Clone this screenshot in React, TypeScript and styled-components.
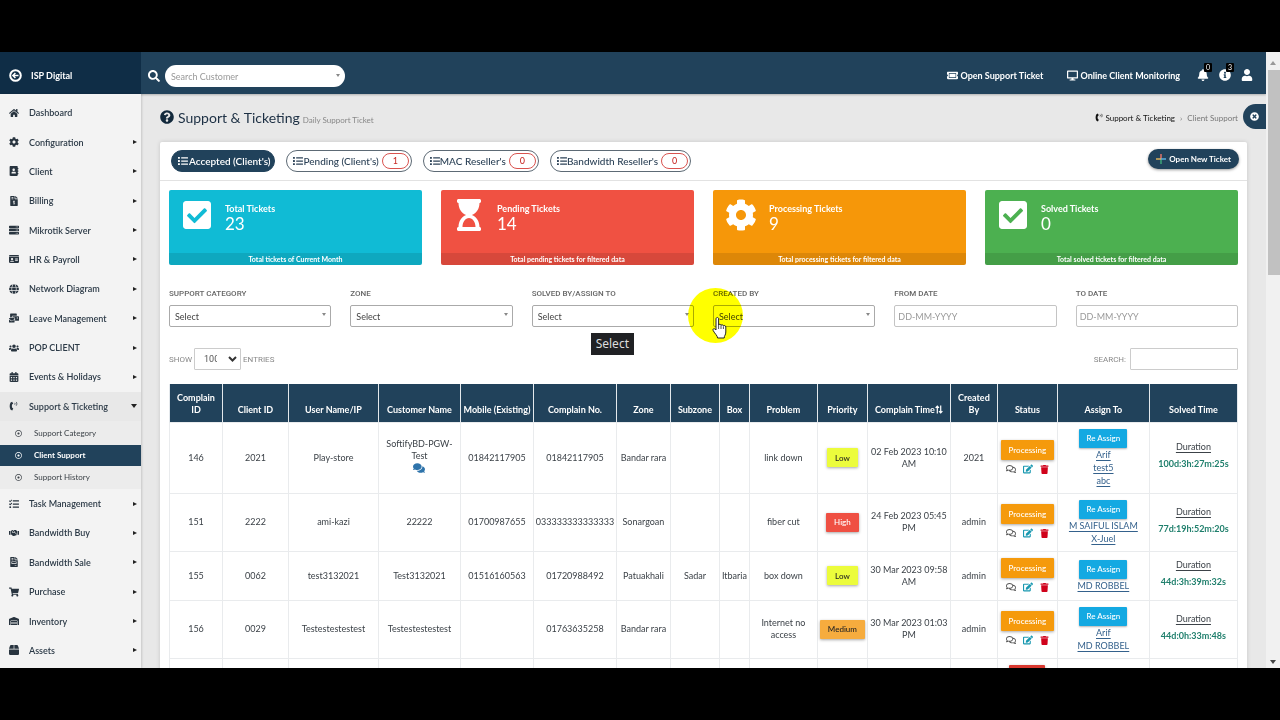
import React from 'react';
import styled, { createGlobalStyle } from 'styled-components';
import {
  FaAddressBook, FaBell, FaBox, FaCalendarAlt, FaCheckSquare, FaCog, FaComments,
  FaDesktop, FaEdit, FaFileInvoice, FaFileInvoiceDollar, FaGlobe, FaHandshake, FaHome,
  FaHourglassStart, FaIdCard, FaInfoCircle, FaList, FaMailBulk, FaQuestionCircle, FaRegComments,
  FaRegDotCircle, FaSearch, FaServer, FaShoppingCart, FaTasks, FaTicketAlt, FaTimesCircle,
  FaTrash, FaUser, FaUsers, FaWarehouse,
} from 'react-icons/fa';

const navy = '#21425b';

const GlobalStyle = createGlobalStyle`
  * { box-sizing: border-box; }
  body { margin: 0; background: #000; font-family: Lato, "Liberation Sans", sans-serif; font-size: 9px; color: #3c4248; }
  button, input, select { font-family: inherit; font-size: inherit; margin: 0; }
  a { color: inherit; text-decoration: none; }
  svg { flex: none; }
`;

const Stage = styled.div`
  height: 100vh;
  padding: 52px 0;
  display: flex;
`;
const Shell = styled.div`
  flex: 1;
  min-width: 0;
  display: flex;
  flex-direction: column;
  background: #e8e8e8;
`;
const Columns = styled.div`
  flex: 1;
  min-height: 0;
  display: flex;
`;

/* top bar */
const TopBar = styled.header`
  display: flex;
  height: 42px;
  flex: none;
  background: ${navy};
  color: #fff;
  box-shadow: 0 1px 2px rgba(0, 0, 0, 0.25);
`;
const Brand = styled.div`
  width: 141px;
  padding: 5px 9px 0;
  display: flex;
  align-items: center;
  gap: 9px;
  background: #0f2d46;
  font-weight: 700;
`;
const TopSearch = styled.div`
  display: flex;
  align-items: center;
  gap: 5px;
  padding: 5px 0 0 7px;
`;
const SelectWrap = styled.div`
  position: relative;
  display: flex;
`;
const Caret = styled.span<{ $top: number }>`
  position: absolute;
  right: 5px;
  top: ${(p) => p.$top}px;
  border: 2px solid transparent;
  border-top: 3px solid #888;
  border-bottom: 0;
  pointer-events: none;
`;
const CustomerSelect = styled.select`
  appearance: none;
  width: 180px;
  height: 22px;
  border: 0;
  border-radius: 11px;
  padding: 1px 6px 0;
  background: #fff;
  color: #999;
`;
const TopLinks = styled.nav`
  margin-left: auto;
  display: flex;
  align-items: center;
  padding: 4px 13px 0 0;
  font-weight: 700;
`;
const TopLink = styled.a`
  display: flex;
  align-items: center;
  gap: 2px;
  margin-right: 24px;
`;
const IconButton = styled.button`
  position: relative;
  display: flex;
  margin-left: 10px;
  padding: 0;
  border: 0;
  background: none;
  color: #fff;
  &:first-of-type { margin-left: -7px; }
`;
const Count = styled.span`
  position: absolute;
  left: 7px;
  top: -6px;
  width: 8px;
  background: #000;
  border-radius: 1px;
  font-size: 7px;
  line-height: 9px;
`;

/* side bar */
const Sidebar = styled.nav`
  width: 141px;
  flex: none;
  display: flex;
  flex-direction: column;
  padding: 4px 0 3px;
  background: #f3f3f3;
  box-shadow: 1px 0 2px rgba(0, 0, 0, 0.15);
  overflow: hidden;
`;
const NavItem = styled.a<{ $open?: boolean }>`
  flex: 1 0 27px;
  display: flex;
  align-items: center;
  padding: 0 4px 0 9px;
  font-weight: 600;
  color: #2c3a47;
  background: ${(p) => (p.$open ? '#e8e8e8' : 'transparent')};
`;
const NavIcon = styled.span`
  width: 20px;
  display: flex;
  font-size: 10px;
  color: #28343f;
`;
const NavArrow = styled.span<{ $down?: boolean }>`
  margin-left: auto;
  border-style: solid;
  border-width: ${(p) => (p.$down ? '4px 3px 0' : '2px 0 2px 4px')};
  border-color: ${(p) => (p.$down ? '#222 transparent' : 'transparent #222')};
`;
const SubMenu = styled.div`
  flex: none;
  padding-top: 1px;
  background: #ececec;
`;
const SubItem = styled.a<{ $active?: boolean }>`
  display: flex;
  align-items: center;
  gap: 12px;
  height: ${(p) => (p.$active ? 21 : 23)}px;
  padding-left: 15px;
  font-size: 8px;
  font-weight: ${(p) => (p.$active ? 700 : 400)};
  color: ${(p) => (p.$active ? '#fff' : 'inherit')};
  background: ${(p) => (p.$active ? navy : 'transparent')};
`;

/* content */
const Main = styled.main`
  position: relative;
  flex: 1;
  min-width: 0;
  padding: 0 19px;
  overflow: hidden;
`;
const TitleRow = styled.div`
  display: flex;
  align-items: center;
  height: 48px;
  padding-bottom: 2px;
`;
const Title = styled.h1`
  margin: 0 3px 0 4px;
  font-size: 14px;
  font-weight: 400;
  color: #1d3044;
`;
const Hint = styled.span`
  padding-top: 5px;
  font-size: 8px;
  color: #888;
`;
const Crumbs = styled.div`
  margin-left: auto;
  margin-right: 9px;
  display: flex;
  align-items: center;
  gap: 5px;
  padding-top: 2px;
  font-size: 8px;
  color: #777;
`;
const CrumbLink = styled.a`
  display: flex;
  gap: 1px;
  color: #111;
`;
const CloseTab = styled.button`
  position: absolute;
  right: 0;
  top: 10px;
  width: 23px;
  height: 25px;
  padding: 0 0 0 7px;
  display: flex;
  align-items: center;
  border: 0;
  border-radius: 13px 0 0 13px;
  background: ${navy};
  color: #fff;
`;
const Card = styled.section`
  background: #fff;
  border-radius: 2px;
  box-shadow: 0 0 4px rgba(0, 0, 0, 0.15);
  height: 100%;
`;
const CardHead = styled.div`
  display: flex;
  align-items: center;
  gap: 11px;
  height: 39px;
  padding: 0 8px 0 11px;
  border-bottom: 1px solid #e2e2e2;
`;
const Tab = styled.button<{ $active?: boolean }>`
  display: flex;
  align-items: center;
  gap: ${(p) => (p.$active ? 1 : 0)}px;
  height: 22px;
  padding: 0 ${(p) => (p.$active ? 4 : 2)}px 0 6px;
  border: 1px solid ${(p) => (p.$active ? navy : '#5d6a75')};
  border-radius: 11px;
  background: ${(p) => (p.$active ? navy : '#fff')};
  color: ${(p) => (p.$active ? '#fff' : '#2c4257')};
  font-size: 10px;
  font-weight: ${(p) => (p.$active ? 600 : 500)};
  white-space: nowrap;
`;
const TabCount = styled.span`
  width: 27px;
  margin-left: 3px;
  border: 1px solid #d9534f;
  border-radius: 8px;
  line-height: 14px;
  color: #c9302c;
  font-size: 9px;
`;
const NewTicket = styled.button`
  display: flex;
  align-items: center;
  gap: 3px;
  height: 20px;
  margin: 0 0 4px auto;
  padding: 0 8px;
  border: 0;
  border-radius: 10px;
  background: ${navy};
  box-shadow: 0 1px 3px rgba(0, 0, 0, 0.4);
  color: #fff;
  font-size: 8px;
  font-weight: 700;
`;
const CardBody = styled.div`
  padding: 9px;
`;
const Stats = styled.div`
  display: grid;
  grid-template-columns: repeat(4, 1fr);
  gap: 19px;
`;
const Stat = styled.div<{ $bg: string }>`
  display: flex;
  flex-direction: column;
  height: 75px;
  border-radius: 2px;
  overflow: hidden;
  background: ${(p) => p.$bg};
  color: #fff;
`;
const StatTop = styled.div`
  flex: 1;
  display: flex;
  gap: 12px;
  padding: 9px 12px;
`;
const StatLabel = styled.div`
  padding-top: 3px;
  font-size: 9px;
  line-height: 13px;
  font-weight: 700;
`;
const StatValue = styled.div`
  font-size: 17px;
  line-height: 18px;
`;
const StatFoot = styled.div`
  background: rgba(0, 0, 0, 0.1);
  text-align: center;
  font-size: 7px;
  line-height: 12px;
  font-weight: 700;
`;
const Filters = styled.div`
  display: grid;
  grid-template-columns: repeat(6, 1fr);
  gap: 19px;
  margin-top: 23px;
`;
const Field = styled.div`
  position: relative;
`;
const Label = styled.label`
  display: block;
  font: 500 8px/12px Roboto, "Liberation Sans", sans-serif;
  color: #666;
  margin-bottom: 5px;
`;
const FieldSelect = styled.select`
  appearance: none;
  width: 100%;
  height: 22px;
  padding: 0 5px;
  border: 1px solid #aaa;
  border-radius: 2px;
  background: #fff;
  color: #444;
`;
const DateInput = styled.input`
  width: 100%;
  height: 22px;
  padding: 0 3px;
  border: 1px solid #c4c4c4;
  border-radius: 2px;
  &::placeholder { color: #999; }
`;
const Tip = styled.div`
  position: absolute;
  z-index: 1;
  left: 59px;
  top: 45px;
  padding: 0 5px;
  background: #202124;
  color: #ddd;
  font: 12px/22px "Noto Sans", sans-serif;
`;
const Halo = styled.div`
  position: absolute;
  left: -25px;
  top: 0;
  width: 55px;
  height: 55px;
  border-radius: 50%;
  background: #ff0;
  mix-blend-mode: multiply;
  pointer-events: none;
`;
const Hand = styled.svg`
  position: absolute;
  left: -1px;
  top: 28px;
  pointer-events: none;
`;
const Tools = styled.div`
  display: flex;
  align-items: center;
  gap: 2px;
  margin: 21px 0 14px;
  font-family: Roboto, "Liberation Sans", sans-serif;
  font-size: 8px;
  color: #888;
`;
const LengthSelect = styled.select`
  appearance: none;
  width: 47px;
  height: 22px;
  padding: 0 23px 0 9px;
  border: 1px solid #ccc;
  border-radius: 1px;
  background: #fff;
  color: #555;
  font-size: 9px;
  text-overflow: clip;
`;
const Chevron = styled.svg`
  position: absolute;
  right: 4px;
  top: 7px;
  pointer-events: none;
`;
const SearchLabel = styled.label`
  margin-left: auto;
`;
const SearchInput = styled.input`
  width: 108px;
  height: 22px;
  margin-left: 2px;
  border: 1px solid #ccc;
  border-radius: 1px;
`;

/* ticket table */
const Table = styled.table`
  width: 100%;
  table-layout: fixed;
  border-collapse: collapse;
  line-height: 12px;
  text-align: center;
`;
const Th = styled.th`
  height: 38px;
  padding: 0 2px 6px;
  vertical-align: bottom;
  background: ${navy};
  border: 1px solid #e3e8ec;
  border-width: 0 1px;
  color: #fff;
  font-weight: 700;
`;
const SortIcon = styled.svg`
  vertical-align: -1px;
`;
const Td = styled.td`
  padding: 6px 1px;
  border: 1px solid #e9ebed;
`;
const Priority = styled.button<{ $level: string }>`
  padding: 0 8px;
  height: 19px;
  border: 0;
  border-radius: 1px;
  box-shadow: 0 1px 3px rgba(0, 0, 0, 0.35);
  background: ${(p) => (p.$level === 'High' ? '#ef5043' : p.$level === 'Low' ? '#ecfc3c' : '#f6ac3e')};
  color: ${(p) => (p.$level === 'High' ? '#fff' : '#222')};
  font-size: 8px;
  font-weight: 500;
`;
const StatusButton = styled.button<{ $red?: boolean }>`
  display: block;
  margin: 0 auto;
  height: 20px;
  min-width: 36px;
  padding: 0 8px;
  border: 0;
  border-radius: 1px;
  box-shadow: 0 1px 3px rgba(0, 0, 0, 0.35);
  background: ${(p) => (p.$red ? '#d9382f' : '#f59a0c')};
  color: #fff;
  font-size: 8px;
  font-weight: 500;
`;
const Actions = styled.div`
  display: flex;
  justify-content: center;
  align-items: flex-end;
  gap: 7px;
  height: 16px;
  padding-bottom: 2px;
`;
const Action = styled.button<{ $color: string }>`
  display: flex;
  padding: 0;
  border: 0;
  background: none;
  font-size: 10px;
  color: ${(p) => p.$color};
`;
const Assign = styled.button`
  display: block;
  margin: 0 auto;
  height: 19px;
  padding: 0 7px;
  border: 0;
  border-radius: 1px;
  background: #14a9e2;
  box-shadow: 0 1px 2px rgba(0, 0, 0, 0.3);
  color: #fff;
  font-size: 8px;
  font-weight: 500;
`;
const Person = styled.a`
  display: block;
  line-height: 13px;
  color: #34618c;
  text-decoration: underline;
  text-underline-offset: 2px;
`;
const Duration = styled.div`
  text-decoration: underline;
  text-underline-offset: 2px;
  margin-bottom: 5px;
`;
const Elapsed = styled.div`
  padding-bottom: 4px;
  color: #1f7f6c;
  font-weight: 700;
`;

/* window scroll bar */
const Scroll = styled.div`
  width: 14px;
  display: flex;
  flex-direction: column;
  align-items: center;
  padding: 9px 0 4px;
  background: #f1f1f1;
`;
const ScrollArrow = styled.span<{ $down?: boolean }>`
  border: 3px solid transparent;
  border-width: ${(p) => (p.$down ? '4px 3px 0' : '0 3px 4px')};
  border-color: ${(p) => (p.$down ? '#444' : '#999')} transparent;
`;
const Thumb = styled.div`
  width: 12px;
  height: 34%;
  margin: 5px 0 auto 2px;
  background: #c1c1c1;
`;

const Phone = ({ size = 10 }: { size?: number }) => (
  <svg width={size} height={size} viewBox="0 0 16 16" fill="currentColor">
    <path d="M5 1 2.500 2.200C.6 6 .6 10 2.600 13.800L5.200 15l1.600-3.200-1.700-1.100c-.8-1.800-.8-3.600 0-5.400l1.700-1.100z" />
    <path d="M9 3c.8.8.8 2 0 3M11.500 1.500c1.400 1.600 1.400 4.400 0 6" fill="none" stroke="currentColor" strokeWidth="1.200" />
  </svg>
);

const BackCircle = () => (
  <svg width="13" height="13" viewBox="0 0 13 13" fill="none" stroke="#fff">
    <circle cx="6.500" cy="6.500" r="5.300" strokeWidth="2" />
    <path d="M9.500 6.500H4M6.400 4 3.900 6.500 6.400 9" strokeWidth="1.500" />
  </svg>
);

const topItems: [string, React.ReactNode][] = [
  ['Dashboard', <FaHome />],
  ['Configuration', <FaCog />],
  ['Client', <FaAddressBook />],
  ['Billing', <FaFileInvoiceDollar />],
  ['Mikrotik Server', <FaServer />],
  ['HR & Payroll', <FaIdCard />],
  ['Network Diagram', <FaGlobe />],
  ['Leave Management', <FaMailBulk />],
  ['POP CLIENT', <FaUsers />],
  ['Events & Holidays', <FaCalendarAlt />],
];
const bottomItems: [string, React.ReactNode][] = [
  ['Task Management', <FaTasks />],
  ['Bandwidth Buy', <FaHandshake />],
  ['Bandwidth Sale', <FaFileInvoice />],
  ['Purchase', <FaShoppingCart />],
  ['Inventory', <FaWarehouse />],
  ['Assets', <FaBox />],
];
const stats: [string, string, string, string, React.ReactNode][] = [
  ['Total Tickets', '23', 'Total tickets of Current Month', '#10bbd5', <FaCheckSquare size={32} />],
  ['Pending Tickets', '14', 'Total pending tickets for filtered data', '#f05142', <FaHourglassStart size={32} />],
  ['Processing Tickets', '9', 'Total processing tickets for filtered data', '#f69709', <FaCog size={32} />],
  ['Solved Tickets', '0', 'Total solved tickets for filtered data', '#4cb050', <FaCheckSquare size={32} />],
];
const columns: [string, number][] = [
  ['Complain ID', 53], ['Client ID', 66], ['User Name/IP', 90], ['Customer Name', 82],
  ['Mobile (Existing)', 73], ['Complain No.', 83], ['Zone', 54], ['Subzone', 49], ['Box', 30],
  ['Problem', 68], ['Priority', 50], ['Complain Time', 83], ['Created By', 47], ['Status', 60],
  ['Assign To', 92], ['Solved Time', 88],
];
const columnTotal = columns.reduce((sum, c) => sum + c[1], 0);

interface Ticket {
  cells: string[];
  priority: string;
  time: string;
  by: string;
  people: string[];
  elapsed: string;
  chat?: boolean;
}
const tickets: Ticket[] = [
  { cells: ['146', '2021', 'Play-store', 'SoftifyBD-PGW-Test', '01842117905', '01842117905', 'Bandar rara', '', '', 'link down'], priority: 'Low', time: '02 Feb 2023 10:10 AM', by: '2021', people: ['Arif', 'test5', 'abc'], elapsed: '100d:3h:27m:25s', chat: true },
  { cells: ['151', '2222', 'ami-kazi', '22222', '01700987655', '033333333333333', 'Sonargoan', '', '', 'fiber cut'], priority: 'High', time: '24 Feb 2023 05:45 PM', by: 'admin', people: ['M SAIFUL ISLAM', 'X-Juel'], elapsed: '77d:19h:52m:20s' },
  { cells: ['155', '0062', 'test3132021', 'Test3132021', '01516160563', '01720988492', 'Patuakhali', 'Sadar', 'Itbaria', 'box down'], priority: 'Low', time: '30 Mar 2023 09:58 AM', by: 'admin', people: ['MD ROBBEL'], elapsed: '44d:3h:39m:32s' },
  { cells: ['156', '0029', 'Testestestestest', 'Testestestestest', '', '01763635258', 'Bandar rara', '', '', 'Internet no access'], priority: 'Medium', time: '30 Mar 2023 01:03 PM', by: 'admin', people: ['Arif', 'MD ROBBEL'], elapsed: '44d:0h:33m:48s' },
];

const MenuLink = ({ label, icon, arrow = true }: { label: string; icon: React.ReactNode; arrow?: boolean }) => (
  <NavItem href="#">
    <NavIcon>{icon}</NavIcon>
    {label}
    {arrow && <NavArrow />}
  </NavItem>
);

const SelectField = ({ id, label, children }: { id: string; label: string; children?: React.ReactNode }) => (
  <Field>
    <Label htmlFor={id}>{label}</Label>
    <SelectWrap>
      <FieldSelect id={id}><option>Select</option></FieldSelect>
      <Caret $top={8} />
    </SelectWrap>
    {children}
  </Field>
);

const DateField = ({ id, label }: { id: string; label: string }) => (
  <Field>
    <Label htmlFor={id}>{label}</Label>
    <DateInput id={id} placeholder="DD-MM-YYYY" />
  </Field>
);

export default function App() {
  return (
    <Stage>
      <GlobalStyle />
      <Shell>
        <TopBar>
          <Brand><BackCircle />ISP Digital</Brand>
          <TopSearch>
            <FaSearch size={12} />
            <SelectWrap>
              <CustomerSelect aria-label="Search Customer"><option>Search Customer</option></CustomerSelect>
              <Caret $top={9} />
            </SelectWrap>
          </TopSearch>
          <TopLinks>
            <TopLink href="#"><FaTicketAlt size={11} />Open Support Ticket</TopLink>
            <TopLink href="#"><FaDesktop size={11} />Online Client Monitoring</TopLink>
            <IconButton aria-label="Notifications"><FaBell size={12} /><Count>0</Count></IconButton>
            <IconButton aria-label="Information"><FaInfoCircle size={12} /><Count>3</Count></IconButton>
            <IconButton aria-label="Account"><FaUser size={12} /></IconButton>
          </TopLinks>
        </TopBar>
        <Columns>
          <Sidebar>
            {topItems.map(([label, icon]) => (
              <MenuLink key={label} label={label} icon={icon} arrow={label !== 'Dashboard'} />
            ))}
            <NavItem href="#" $open><NavIcon><Phone /></NavIcon>Support &amp; Ticketing<NavArrow $down /></NavItem>
            <SubMenu>
              <SubItem href="#"><FaRegDotCircle size={7} />Support Category</SubItem>
              <SubItem href="#" $active><FaRegDotCircle size={7} />Client Support</SubItem>
              <SubItem href="#"><FaRegDotCircle size={7} />Support History</SubItem>
            </SubMenu>
            {bottomItems.map(([label, icon]) => <MenuLink key={label} label={label} icon={icon} />)}
          </Sidebar>
          <Main>
            <TitleRow>
              <FaQuestionCircle size={14} color="#12293c" />
              <Title>Support &amp; Ticketing</Title>
              <Hint>Daily Support Ticket</Hint>
              <Crumbs>
                <CrumbLink href="#"><Phone size={9} />Support &amp; Ticketing</CrumbLink>
                <span>›</span>
                <span>Client Support</span>
              </Crumbs>
            </TitleRow>
            <CloseTab aria-label="Close"><FaTimesCircle size={9} /></CloseTab>
            <Card>
              <CardHead>
                <Tab $active><FaList />Accepted (Client's)</Tab>
                <Tab><FaList />Pending (Client's)<TabCount>1</TabCount></Tab>
                <Tab><FaList />MAC Reseller's<TabCount>0</TabCount></Tab>
                <Tab><FaList />Bandwidth Reseller's<TabCount>0</TabCount></Tab>
                <NewTicket>
                  <svg width="10" height="10" viewBox="0 0 10 10" strokeWidth="1.400">
                    <path d="M5 0v5" stroke="#f0776b" /><path d="M5 5v5" stroke="#3fae7a" />
                    <path d="M0 5h5" stroke="#e9b95b" /><path d="M5 5h5" stroke="#5fb6e8" />
                  </svg>
                  Open New Ticket
                </NewTicket>
              </CardHead>
              <CardBody>
                <Stats>
                  {stats.map(([label, value, foot, bg, icon]) => (
                    <Stat key={label} $bg={bg}>
                      <StatTop>
                        {icon}
                        <div><StatLabel>{label}</StatLabel><StatValue>{value}</StatValue></div>
                      </StatTop>
                      <StatFoot>{foot}</StatFoot>
                    </Stat>
                  ))}
                </Stats>
                <Filters>
                  <SelectField id="category" label="SUPPORT CATEGORY" />
                  <SelectField id="zone" label="ZONE" />
                  <SelectField id="solved" label="SOLVED BY/ASSIGN TO"><Tip role="tooltip">Select</Tip></SelectField>
                  <SelectField id="created" label="CREATED BY">
                    <Halo />
                    <Hand width="15" height="23" viewBox="0 0 15 23">
                      <path d="M4 14V3c0-2 2.600-2 2.600 0v6c.4-1.200 2.400-1 2.400.4.5-1 2.400-.8 2.400.6.6-.9 2.400-.6 2.400 1V16c0 3-1.600 3.600-1.600 6H5.600C5.400 19.500 3 18 1.200 14.600.300 13 2 11.600 4 14z" fill="#fff" stroke="#222" />
                      <path d="M6.600 9v4M9 9.500V13M11.400 10.500V13" stroke="#222" strokeWidth=".8" />
                    </Hand>
                  </SelectField>
                  <DateField id="from" label="FROM DATE" />
                  <DateField id="to" label="TO DATE" />
                </Filters>
                <Tools>
                  <label htmlFor="length">SHOW</label>
                  <SelectWrap>
                    <LengthSelect id="length"><option>100</option></LengthSelect>
                    <Chevron width="9" height="8" viewBox="0 0 9 8">
                      <path d="M1 2l3.500 3.500L8 2" fill="none" stroke="#333" strokeWidth="2" />
                    </Chevron>
                  </SelectWrap>
                  <span>ENTRIES</span>
                  <SearchLabel htmlFor="search">SEARCH:</SearchLabel>
                  <SearchInput id="search" />
                </Tools>
                <Table>
                  <colgroup>
                    {columns.map(([name, w]) => <col key={name} style={{ width: `${(w / columnTotal) * 100}%` }} />)}
                  </colgroup>
                  <thead>
                    <tr>
                      {columns.map(([name]) => (
                        <Th key={name}>
                          {name}
                          {name === 'Complain Time' && (
                            <SortIcon width="8" height="9" viewBox="0 0 8 9" fill="none" stroke="#fff" strokeWidth="1.200">
                              <path d="M2.300 8.500V1M.6 2.800 2.300 1 4 2.800M5.700.5V8M4 6.200 5.700 8l1.700-1.800" />
                            </SortIcon>
                          )}
                        </Th>
                      ))}
                    </tr>
                  </thead>
                  <tbody>
                    {tickets.map((t) => (
                      <tr key={t.cells[0]}>
                        {t.cells.map((c, i) => (
                          <Td key={i}>
                            {c}
                            {i === 3 && t.chat && <div><FaComments size={12} color="#2f74ab" /></div>}
                          </Td>
                        ))}
                        <Td><Priority $level={t.priority}>{t.priority}</Priority></Td>
                        <Td>{t.time}</Td>
                        <Td>{t.by}</Td>
                        <Td>
                          <StatusButton>Processing</StatusButton>
                          <Actions>
                            <Action $color="#555" aria-label="Comments"><FaRegComments /></Action>
                            <Action $color="#1898b0" aria-label="Edit"><FaEdit /></Action>
                            <Action $color="#d0021b" aria-label="Delete"><FaTrash size={9} /></Action>
                          </Actions>
                        </Td>
                        <Td>
                          <Assign>Re Assign</Assign>
                          {t.people.map((p) => <Person key={p} href="#">{p}</Person>)}
                        </Td>
                        <Td><Duration>Duration</Duration><Elapsed>{t.elapsed}</Elapsed></Td>
                      </tr>
                    ))}
                    <tr>
                      {columns.map(([name]) => (
                        <Td key={name}>{name === 'Status' && <StatusButton $red aria-label="Pending" />}</Td>
                      ))}
                    </tr>
                  </tbody>
                </Table>
              </CardBody>
            </Card>
          </Main>
        </Columns>
      </Shell>
      <Scroll><ScrollArrow /><Thumb /><ScrollArrow $down /></Scroll>
    </Stage>
  );
}
